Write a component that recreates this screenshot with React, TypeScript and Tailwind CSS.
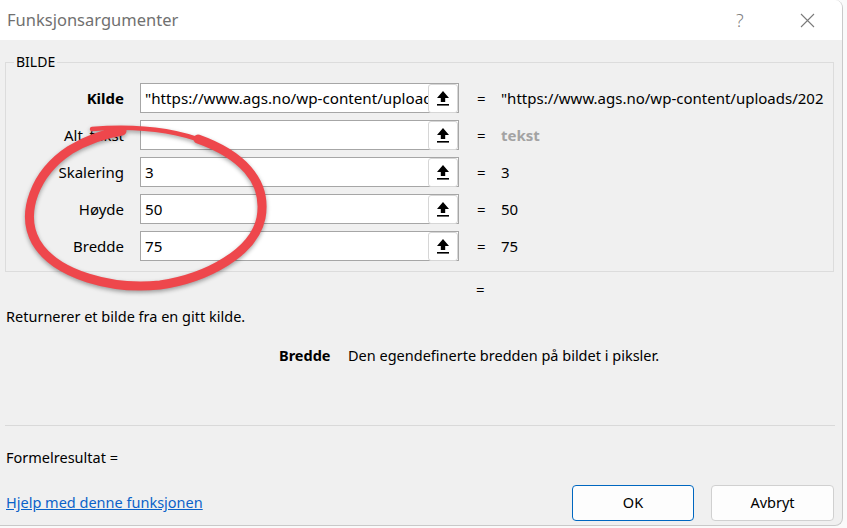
import React from 'react';

const font = "font-['Noto_Sans','DejaVu_Sans',sans-serif]";

interface Arg {
  label: string;
  value: string;
  result: string;
  bold?: boolean;
  hint?: boolean;
}

const args: Arg[] = [
  { label: 'Kilde', value: '"https://www.ags.no/wp-content/uploads/2023/', result: '"https://www.ags.no/wp-content/uploads/202', bold: true },
  { label: 'Alt_tekst', value: '', result: 'tekst', hint: true },
  { label: 'Skalering', value: '3', result: '3' },
  { label: 'Høyde', value: '50', result: '50' },
  { label: 'Bredde', value: '75', result: '75' },
];

const RefIcon = () => (
  <svg width="14" height="16" viewBox="0 0 14 16" fill="#000">
    <path d="M7 1 L13 8 H9.2 V12 H4.8 V8 H1 Z" />
    <rect x="1" y="14" width="12" height="1.6" />
  </svg>
);

const ArgRow = ({ arg }: { arg: Arg }) => (
  <div className="flex items-center h-[30px]">
    <div className={`w-[118px] text-right text-[15px] text-black ${arg.bold ? 'font-bold' : ''}`}>{arg.label}</div>
    <div className="ml-[16px] w-[319px] h-[30px] bg-white border border-[#a6a6a6] flex items-center">
      <div className="flex-1 min-w-0 overflow-hidden whitespace-nowrap pl-[4px] text-[15.2px] text-black leading-[20px]">
        {arg.value}
      </div>
      <div className="w-[30px] h-[29px] shrink-0 bg-white border border-[#d6d6d6] rounded-[3px] flex items-center justify-center">
        <RefIcon />
      </div>
    </div>
    <div className="ml-[18px] w-[24px] text-[15px] text-black">=</div>
    <div className={`text-[15px] whitespace-nowrap ${arg.hint ? 'font-bold text-[#a3a3a3]' : 'text-black'}`}>{arg.result}</div>
  </div>
);

export default function App() {
  return (
    <div className={`w-[847px] h-[528px] bg-[#fafafa] relative overflow-hidden ${font}`}>
      <div className="w-[843px] h-[526px] bg-[#f0f0f0] border-r border-b border-[#c9c9c9] rounded-tr-[8px] rounded-br-[8px] overflow-hidden flex flex-col">
        {/* title bar */}
        <div className="h-[40px] bg-white flex items-center shrink-0">
          <div className="pl-[7px] text-[16.5px] text-[#707070]">Funksjonsargumenter</div>
          <div className="ml-auto w-[16px] text-[18px] font-light text-[#808080] mr-[48px]">?</div>
          <svg width="15" height="15" viewBox="0 0 15 15" className="mr-[27px]" stroke="#7a7a7a" strokeWidth="1.1">
            <path d="M1 1 L14 14 M14 1 L1 14" />
          </svg>
        </div>

        <div className="flex-1 flex flex-col px-[5px]">
          <fieldset className="mt-[13px] w-[829px] border border-[#dcdcdc] pb-[10px] pt-[12px]">
            <legend className="ml-[8px] px-[2px] text-[14px] text-black leading-[18px]">BILDE</legend>
            <div className="flex flex-col gap-[7px]">
              {args.map(a => (
                <ArgRow key={a.label} arg={a} />
              ))}
            </div>
          </fieldset>

          <div className="mt-[6px] h-[22px] pl-[471px] text-[15px] text-black leading-[22px]">=</div>
          <div className="mt-[6px] text-[14.5px] text-black pl-[1px]">Returnerer et bilde fra en gitt kilde.</div>
          <div className="mt-[17px] flex text-[14.5px] text-black">
            <div className="pl-[274px] w-[343px] font-bold">Bredde</div>
            <div>Den egendefinerte bredden på bildet i piksler.</div>
          </div>

          <div className="mt-[58px] h-px bg-[#d9d9d9] w-[830px]" />

          <div className="mt-[21px] text-[14.5px] text-black pl-[1px]">Formelresultat =</div>

          <div className="mt-[17px] flex items-center">
            <a href="#" className="pl-[1px] text-[14.5px] text-[#0a62c9] underline">Hjelp med denne funksjonen</a>
            <button className="ml-auto w-[122px] h-[36px] bg-[#fdfdfd] border border-[#0067c0] rounded-[4px] text-[14.5px] text-black">OK</button>
            <button className="ml-[17px] mr-[3px] w-[123px] h-[36px] bg-[#fdfdfd] border border-[#d0d0d0] rounded-[4px] text-[14.5px] text-black">Avbryt</button>
          </div>
        </div>
      </div>

      {/* hand-drawn red annotation */}
      <svg
        width="847"
        height="528"
        viewBox="0 0 847 528"
        className="absolute left-0 top-0 pointer-events-none drop-shadow-[0_2px_2px_rgba(0,0,0,0.35)]"
        fill="none"
        stroke="#ee474c"
        strokeLinecap="round"
      >
        <path d="M92 129 C130 126 172 129 205 142" strokeWidth="4.5" />
        <path d="M198 139 C240 154 268 180 261 218 C254 252 208 278 160 285 C114 290 56 276 36 242 C20 213 35 173 70 150 C88 139 104 134 122 131" strokeWidth="9" />
      </svg>
    </div>
  );
}
